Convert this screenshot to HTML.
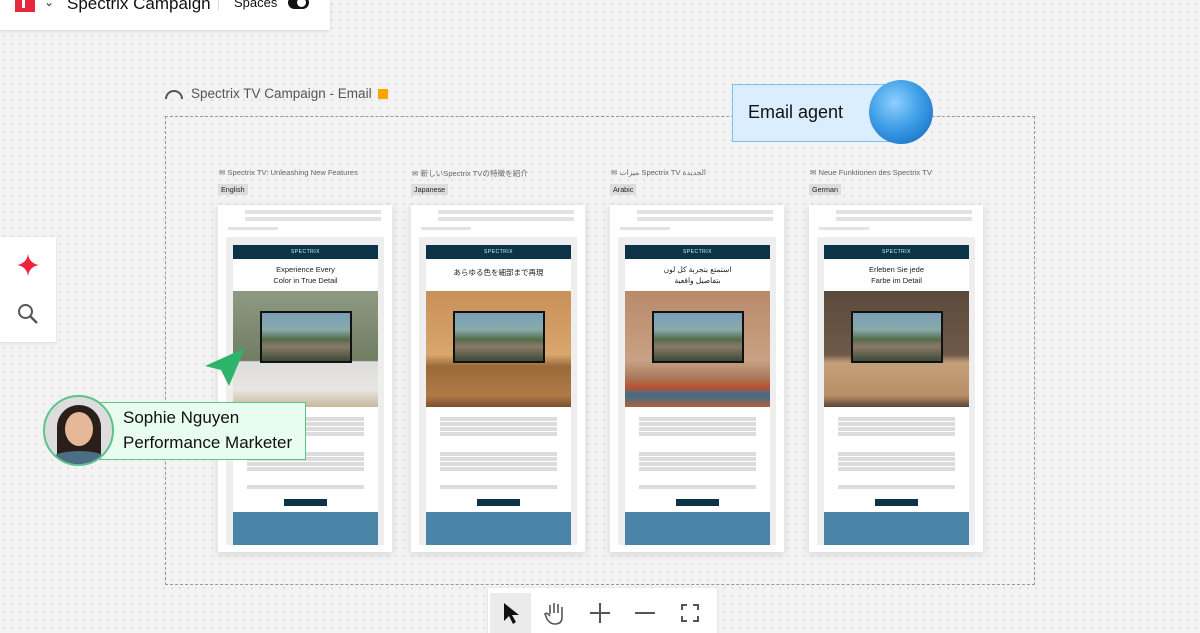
<!DOCTYPE html>
<html><head><meta charset="utf-8"><style>
*{margin:0;padding:0;box-sizing:border-box}
body{width:1200px;height:630px;overflow:hidden;position:relative;background:#f3f3f3;background-image:radial-gradient(circle,#dadada 0.8px,transparent 1.1px);background-size:8px 8px;font-family:"Liberation Sans","Noto Sans CJK JP",sans-serif;color:#111}
.abs{position:absolute}
.card{position:absolute;top:205px;width:174px;height:347px;background:#fff;box-shadow:0 2px 8px rgba(0,0,0,.12)}
.card .gl{position:absolute;height:4px;background:#e3e3e3}
.inner{position:absolute;left:8px;top:32px;width:158px;height:308px;background:#eee}
.mail{position:absolute;left:7px;top:8px;width:145px;height:300px;background:#fff}
.ban{height:14px;background:#0d3349;color:#cfe;font-size:5px;text-align:center;line-height:14px;letter-spacing:.5px}
.ttl{height:32px;font-size:7.5px;text-align:center;line-height:11px;padding-top:5px;color:#222}
.img{height:116px;position:relative;overflow:hidden}
.tv{position:absolute;left:27px;top:20px;width:92px;height:52px;background:#111;padding:2px}
.tv div{width:100%;height:100%;background:linear-gradient(180deg,#7aa0b8 0%,#8aa 35%,#556b4a 55%,#8a7a66 70%,#3d4a3a 100%)}
.ln{position:absolute;left:14px;width:117px;height:4px;background:#dcdcdc}
.btn{position:absolute;left:51px;top:254px;width:43px;height:7px;background:#0d3349}
.foot{position:absolute;left:0;top:267px;width:145px;height:33px;background:#4a84a6}
.subj{position:absolute;top:168px;font-size:7.6px;color:#666;white-space:nowrap}
.tag{position:absolute;top:184px;font-size:7.2px;background:#ddd;padding:1px 3px;color:#222}
</style></head><body>
<div class="abs" style="left:0;top:0;width:330px;height:30px;background:#fff;box-shadow:0 1px 3px rgba(0,0,0,.12)">
<div class="abs" style="left:15px;top:0;width:20px;height:12px;background:#e8263c"></div>
<div class="abs" style="left:22px;top:0;width:3px;height:8px;background:#fff"></div>
<div class="abs" style="left:44px;top:-5px;font-size:12px;color:#333">⌄</div>
<div class="abs" style="left:67px;top:-6px;font-size:17px">Spectrix Campaign</div>
<div class="abs" style="left:218px;top:0;width:1px;height:10px;background:#ddd"></div>
<div class="abs" style="left:234px;top:-5px;font-size:13px">Spaces</div>
<div class="abs" style="left:288px;top:-4px;width:21px;height:13px;border-radius:7px;background:#111"></div>
<div class="abs" style="left:297px;top:-2px;width:9px;height:9px;border-radius:50%;background:#fff"></div>
</div>
<svg class="abs" style="left:164px;top:87px" width="20" height="14"><path d="M2 12 A8 8 0 0 1 18 12" fill="none" stroke="#555" stroke-width="2"/></svg>
<div class="abs" style="left:191px;top:86px;font-size:13.5px;color:#555">Spectrix TV Campaign - Email</div>
<div class="abs" style="left:378px;top:89px;width:10px;height:10px;background:#ffa300"></div>
<div class="abs" style="left:165px;top:116px;width:870px;height:469px;border:1px dashed #999"></div>
<div class="abs" style="left:0;top:237px;width:56px;height:105px;background:#fff;box-shadow:0 1px 3px rgba(0,0,0,.1)">
<svg class="abs" style="left:17px;top:17px" width="22" height="22"><path d="M11 0 Q12.5 9.5 22 11 Q12.5 12.5 11 22 Q9.5 12.5 0 11 Q9.5 9.5 11 0Z" fill="#ef233c"/></svg>
<svg class="abs" style="left:17px;top:66px" width="22" height="22"><circle cx="8.5" cy="8.5" r="6.5" fill="none" stroke="#555" stroke-width="2"/><path d="M13 13 L20 20" stroke="#555" stroke-width="2.4"/></svg>
</div>

<div class="subj" style="left:219px">✉ Spectrix TV: Unleashing New Features</div><div class="tag" style="left:218px">English</div>
<div class="subj" style="left:412px">✉ 新しいSpectrix TVの特徴を紹介</div><div class="tag" style="left:411px">Japanese</div>
<div class="subj" style="left:611px">✉ ميزات Spectrix TV الجديدة</div><div class="tag" style="left:610px">Arabic</div>
<div class="subj" style="left:810px">✉ Neue Funktionen des Spectrix TV</div><div class="tag" style="left:809px">German</div>

<div class="card" style="left:218px"><div class="gl" style="left:27px;top:5px;width:136px"></div><div class="gl" style="left:27px;top:12px;width:136px"></div><div class="gl" style="left:10px;top:22px;width:50px;height:3px"></div>
<div class="inner"><div class="mail"><div class="ban">SPECTRIX</div><div class="ttl">Experience Every<br>Color in True Detail</div>
<div class="img" style="background:linear-gradient(180deg,#8f9a82 0%,#6f7d63 60%,#ddd 61%,#e8e6e0 85%,#c9b89c 100%)"><div class="tv"><div></div></div></div>
<div class="ln" style="top:172px"></div><div class="ln" style="top:177px"></div><div class="ln" style="top:182px"></div><div class="ln" style="top:187px"></div>
<div class="ln" style="top:207px"></div><div class="ln" style="top:212px"></div><div class="ln" style="top:217px"></div><div class="ln" style="top:222px"></div><div class="ln" style="top:240px"></div>
<div class="btn"></div><div class="foot"></div></div></div></div>

<div class="card" style="left:411px"><div class="gl" style="left:27px;top:5px;width:136px"></div><div class="gl" style="left:27px;top:12px;width:136px"></div><div class="gl" style="left:10px;top:22px;width:50px;height:3px"></div>
<div class="inner"><div class="mail"><div class="ban">SPECTRIX</div><div class="ttl" style="padding-top:8px">あらゆる色を細部まで再現</div>
<div class="img" style="background:linear-gradient(180deg,#c89058 0%,#d9a66d 55%,#9a6a3a 65%,#b07a45 90%,#7a5030 100%)"><div class="tv"><div></div></div></div>
<div class="ln" style="top:172px"></div><div class="ln" style="top:177px"></div><div class="ln" style="top:182px"></div><div class="ln" style="top:187px"></div>
<div class="ln" style="top:207px"></div><div class="ln" style="top:212px"></div><div class="ln" style="top:217px"></div><div class="ln" style="top:222px"></div><div class="ln" style="top:240px"></div>
<div class="btn"></div><div class="foot"></div></div></div></div>

<div class="card" style="left:610px"><div class="gl" style="left:27px;top:5px;width:136px"></div><div class="gl" style="left:27px;top:12px;width:136px"></div><div class="gl" style="left:10px;top:22px;width:50px;height:3px"></div>
<div class="inner"><div class="mail"><div class="ban">SPECTRIX</div><div class="ttl">استمتع بتجربة كل لون<br>بتفاصيل واقعية</div>
<div class="img" style="background:linear-gradient(180deg,#b98a6c 0%,#c9a184 60%,#a77a5a 75%,#c0522f 82%,#3d6d8a 90%,#b0603a 100%)"><div class="tv"><div></div></div></div>
<div class="ln" style="top:172px"></div><div class="ln" style="top:177px"></div><div class="ln" style="top:182px"></div><div class="ln" style="top:187px"></div>
<div class="ln" style="top:207px"></div><div class="ln" style="top:212px"></div><div class="ln" style="top:217px"></div><div class="ln" style="top:222px"></div><div class="ln" style="top:240px"></div>
<div class="btn"></div><div class="foot"></div></div></div></div>

<div class="card" style="left:809px"><div class="gl" style="left:27px;top:5px;width:136px"></div><div class="gl" style="left:27px;top:12px;width:136px"></div><div class="gl" style="left:10px;top:22px;width:50px;height:3px"></div>
<div class="inner"><div class="mail"><div class="ban">SPECTRIX</div><div class="ttl">Erleben Sie jede<br>Farbe im Detail</div>
<div class="img" style="background:linear-gradient(180deg,#5b4a3c 0%,#6e5a48 55%,#c4a07a 62%,#b88f68 90%,#5a4535 100%)"><div class="tv"><div></div></div></div>
<div class="ln" style="top:172px"></div><div class="ln" style="top:177px"></div><div class="ln" style="top:182px"></div><div class="ln" style="top:187px"></div>
<div class="ln" style="top:207px"></div><div class="ln" style="top:212px"></div><div class="ln" style="top:217px"></div><div class="ln" style="top:222px"></div><div class="ln" style="top:240px"></div>
<div class="btn"></div><div class="foot"></div></div></div></div>

<div class="abs" style="left:732px;top:84px;width:160px;height:58px;background:#dbeeff;border:1px solid #7cc0f0"></div>
<div class="abs" style="left:748px;top:102px;font-size:18px">Email agent</div>
<div class="abs" style="left:869px;top:80px;width:64px;height:64px;border-radius:50%;background:radial-gradient(circle at 40% 35%,#8fd0ff 0%,#3f9fe6 45%,#1e78cc 80%,#1a5fb0 100%)"></div>

<svg class="abs" style="left:203px;top:346px" width="44" height="42"><path d="M42 2 L2 20 L18 24 L26 40 Z" fill="#2db36a"/></svg>
<div class="abs" style="left:100px;top:402px;width:206px;height:58px;background:#e8fdf0;border:1px solid #5cc48a"></div>
<div class="abs" style="left:123px;top:408px;font-size:17px">Sophie Nguyen</div>
<div class="abs" style="left:123px;top:433px;font-size:17px">Performance Marketer</div>
<div class="abs" style="left:43px;top:395px;width:71px;height:71px;border-radius:50%;border:2px solid #5cc48a;overflow:hidden;background:#ddd">
<div class="abs" style="left:12px;top:8px;width:44px;height:60px;border-radius:22px 22px 6px 6px;background:#2a1e18"></div>
<div class="abs" style="left:20px;top:15px;width:28px;height:34px;border-radius:50%;background:#e6b89a"></div>
<div class="abs" style="left:4px;top:54px;width:60px;height:20px;border-radius:50% 50% 0 0;background:#4a6f85"></div>
</div>

<div class="abs" style="left:488px;top:588px;width:229px;height:45px;background:#fff;box-shadow:0 1px 3px rgba(0,0,0,.12)">
<div class="abs" style="left:2px;top:5px;width:41px;height:40px;background:#ebebeb"></div>
<svg class="abs" style="left:14px;top:14px" width="20" height="24"><path d="M2 1 L2 19 L7 14 L11 22 L14 20 L10 13 L17 13 Z" fill="#111"/></svg>
<svg class="abs" style="left:55px;top:12px" width="24" height="26" fill="none" stroke="#555" stroke-width="1.6"><path d="M7 14 V5 M11 13 V3 M15 13 V4 M19 14 V7 M19 14 V17 Q19 24 12 24 Q7 24 4 19 L2 14 Q4 12 7 16"/></svg>
<svg class="abs" style="left:102px;top:15px" width="20" height="20"><path d="M10 0 V20 M0 10 H20" stroke="#555" stroke-width="2"/></svg>
<svg class="abs" style="left:147px;top:15px" width="20" height="20"><path d="M0 10 H20" stroke="#555" stroke-width="2"/></svg>
<svg class="abs" style="left:193px;top:16px" width="18" height="18" fill="none" stroke="#555" stroke-width="2"><path d="M1 6 V1 H6 M12 1 H17 V6 M17 12 V17 H12 M6 17 H1 V12"/></svg>
</div>
</body></html>
